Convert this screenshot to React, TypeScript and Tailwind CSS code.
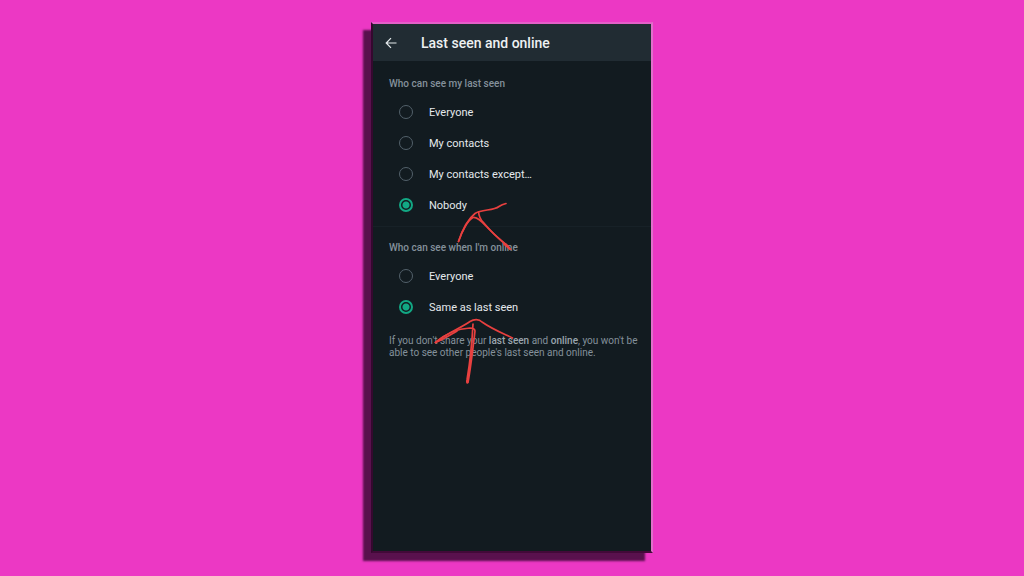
import { useState } from "react";

type RadioGroupProps = {
  legend: string;
  name: string;
  options: string[];
  initial: string;
};

function RadioGroup({ legend, name, options, initial }: RadioGroupProps) {
  const [value, setValue] = useState(initial);
  return (
    <fieldset>
      <legend className="px-4 text-[10px] leading-3 font-medium text-[#84919b]">{legend}</legend>
      <div className="pt-1.5">
        {options.map((option) => (
          <label key={option} className="flex h-[31px] items-center gap-4 pl-[26px] text-[11px] leading-4 text-[#e4e9ec]">
            <input
              type="radio"
              name={name}
              value={option}
              checked={value === option}
              onChange={() => setValue(option)}
              className="size-3.5 shrink-0 appearance-none rounded-full border border-[#53616b] checked:border-2 checked:border-[#12a884] checked:bg-[radial-gradient(circle,#12a884_3px,transparent_4px)]"
            />
            <span className="pt-0.5">{option}</span>
          </label>
        ))}
      </div>
    </fieldset>
  );
}

function Annotations() {
  return (
    <svg
      aria-hidden="true"
      className="pointer-events-none absolute top-0 left-0 h-[400px] w-[277px]"
      viewBox="373 24 277 400"
      fill="none"
      stroke="#e8403f"
      strokeWidth="1.7"
      strokeLinecap="round"
      strokeLinejoin="round"
    >
      <path d="M458.5 241.5C462 231 468 219 475 213.500C482 209 493 211 499 206.500C502 204.500 504 204 506 203.500" />
      <path d="M458.500 241.500C462 231 468 220 473 217.500C478 216.500 484 224 490 230C497 237 504 243 510 249" />
      <path d="M478.500 212C479 216 480 219 483 222C491 232 500 240 508 246L510.500 249.500L504 244" />
      <path d="M435.500 342.500C447 333 461 328 470 321.500C474 319 479 319 482 322C492 329 502 333 512.500 338" />
      <path d="M435.500 342.500C445 334 458 328.500 470 328C473 328 475 328.500 475 331C473 348 471 366 468 382.500C467 383.500 466.500 382 467 380C470 362 472 343 473 324" />
      <path d="M435.500 342.500C444 339 450 335 457 331" />
    </svg>
  );
}

export default function App() {
  return (
    <main className="flex min-h-screen justify-center bg-[#ec38c4] pt-[22px] pb-[23px] font-[Roboto,sans-serif]">
      <div className="relative flex w-full max-w-[282px] flex-col border-2 border-t-[#e45fc8] border-r-[#e06fcb] border-b-[#420938] border-l-[#35082f] bg-[#121b20] shadow-[-8px_8px_2px_0px_#59114d]">
        <header className="flex h-[37px] items-center gap-[23px] bg-[#212c33] pl-[11px]">
          <button type="button" aria-label="Back" className="text-[#e4e9ec]">
            <svg className="size-3.5" viewBox="0 0 14 14" fill="none" stroke="currentColor" strokeWidth="1.2">
              <path d="M12.500 7H2.200M7 2.200L2.200 7L7 11.800" />
            </svg>
          </button>
          <h1 className="pt-0.5 text-[14px] font-medium text-[#eef1f2]">Last seen and online</h1>
        </header>
        <section className="border-b border-[#172127] pt-[17px] pb-1.5">
          <RadioGroup
            legend="Who can see my last seen"
            name="last-seen"
            options={["Everyone", "My contacts", "My contacts except…", "Nobody"]}
            initial="Nobody"
          />
        </section>
        <section className="pt-[15px]">
          <RadioGroup
            legend="Who can see when I'm online"
            name="online"
            options={["Everyone", "Same as last seen"]}
            initial="Same as last seen"
          />
          <p className="pt-[13px] pr-2 pl-4 text-[10px] leading-3 text-[#84919b]">
            If you don't share your <b className="font-medium text-[#9aa6ae]">last seen</b> and{" "}
            <b className="font-medium text-[#9aa6ae]">online</b>, you won't be able to see other people's last seen and
            online.
          </p>
        </section>
        <Annotations />
      </div>
    </main>
  );
}
